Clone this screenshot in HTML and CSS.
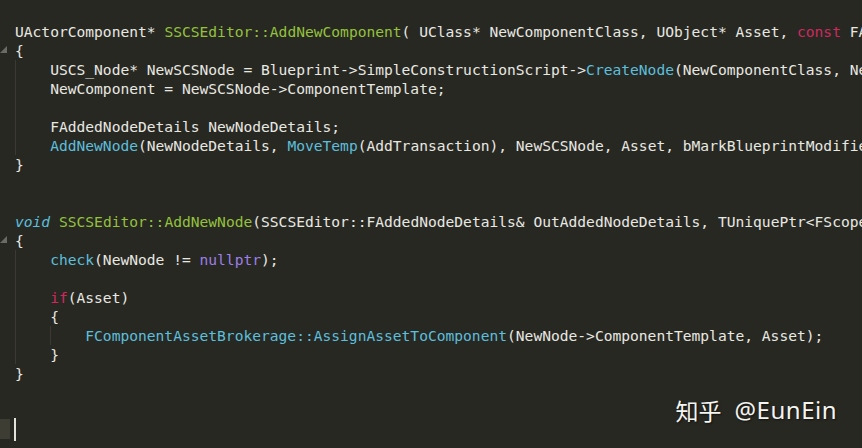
FILE: index.html
```html
<!DOCTYPE html>
<html>
<head>
<meta charset="utf-8">
<link rel="stylesheet" href="styles.css">
</head>
<body>
<div class="editor">
  <div class="code">
    <div class="ln">UActorComponent* <span class="fn">SSCSEditor::AddNewComponent</span>( UClass* NewComponentClass, UObject* Asset, <span class="kw">const</span> FAddNewComponentParams&amp; Params )</div>
    <div class="ln fold">{</div>
    <div class="blk">
      <div class="ln">USCS_Node* NewSCSNode = Blueprint-&gt;SimpleConstructionScript-&gt;<span class="cy">CreateNode</span>(NewComponentClass, NewComponentVariableName);</div>
      <div class="ln">NewComponent = NewSCSNode-&gt;ComponentTemplate;</div>
      <div class="ln"></div>
      <div class="ln">FAddedNodeDetails NewNodeDetails;</div>
      <div class="ln"><span class="cy">AddNewNode</span>(NewNodeDetails, <span class="cy">MoveTemp</span>(AddTransaction), NewSCSNode, Asset, bMarkBlueprintModified, bSetFocusToNewItem);</div>
    </div>
    <div class="ln">}</div>
    <div class="ln"></div>
    <div class="ln"></div>
    <div class="ln"><span class="cyi">void</span> <span class="fn">SSCSEditor::AddNewNode</span>(SSCSEditor::FAddedNodeDetails&amp; OutAddedNodeDetails, TUniquePtr&lt;FScopedTransaction&gt; InOngoingCreateTransaction, USCS_Node* NewNode)</div>
    <div class="ln fold">{</div>
    <div class="blk">
      <div class="ln"><span class="cy">check</span>(NewNode != <span class="pu">nullptr</span>);</div>
      <div class="ln"></div>
      <div class="ln"><span class="kw">if</span>(Asset)</div>
      <div class="ln">{</div>
      <div class="blk">
        <div class="ln"><span class="cy">FComponentAssetBrokerage::AssignAssetToComponent</span>(NewNode-&gt;ComponentTemplate, Asset);</div>
      </div>
      <div class="ln">}</div>
    </div>
    <div class="ln">}</div>
    <div class="ln"></div>
    <div class="ln"></div>
    <div class="ln current"><span class="caret"></span></div>
  </div>
  <div class="watermark"><span class="zh">知乎</span><span class="at">@EunEin</span></div>
</div>
</body>
</html>
```
FILE: styles.css
```css
html, body {
  margin: 0;
  padding: 0;
  background: #282823;
}
.editor {
  position: relative;
  width: 862px;
  height: 448px;
  overflow: hidden;
  background: #282823;
}
.code {
  padding: 22px 0 0 15px;
  font-family: "DejaVu Sans Mono", "Liberation Mono", monospace;
  font-size: 14.6px;
  line-height: 19px;
  color: #e8e8e2;
}
.ln {
  position: relative;
  height: 19px;
  white-space: pre;
}
.blk {
  border-left: 1px solid #3a3a33;
  padding-left: calc(4ch - 1px);
}
.fold::before {
  content: "";
  position: absolute;
  left: -15px;
  top: 5px;
  width: 0;
  height: 0;
  border-left: 7px solid transparent;
  border-bottom: 7px solid #6b6b66;
}
.fn { color: #94c23c; }
.cy { color: #5cbfdc; }
.cyi { color: #5cbfdc; font-style: italic; }
.kw { color: #d0285e; }
.pu { color: #9c7fe8; }
.current::before {
  content: "";
  position: absolute;
  left: -15px;
  top: -2px;
  width: 10px;
  height: 20px;
  background: #3d3d33;
}
.caret {
  display: inline-block;
  width: 2px;
  height: 23px;
  margin-left: -1px;
  margin-top: -3px;
  vertical-align: top;
  background: #e2e2da;
}
.watermark {
  position: absolute;
  right: 25px;
  top: 395px;
  display: flex;
  align-items: center;
  gap: 13px;
  line-height: 30px;
  color: #f4f4f0;
  text-shadow: 1px 1px 2px rgba(0,0,0,0.6);
  white-space: pre;
}
.zh {
  font-family: "Noto Sans CJK SC", sans-serif;
  font-size: 23px;
}
.at {
  font-family: "Noto Sans", sans-serif;
  font-size: 24px;
  letter-spacing: 0.5px;
}
```
